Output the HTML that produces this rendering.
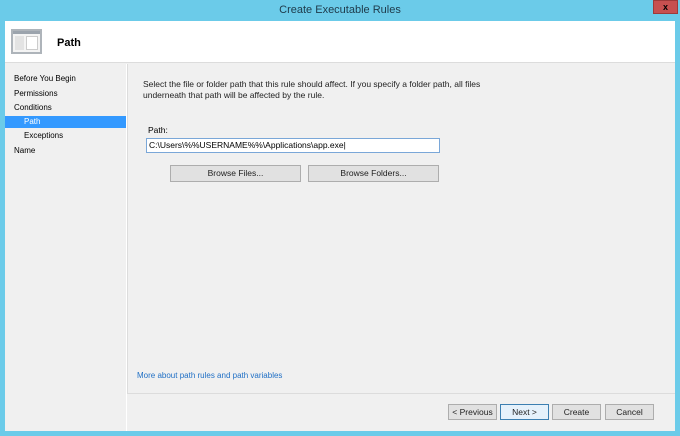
<!DOCTYPE html>
<html><head><style>
*{margin:0;padding:0;box-sizing:border-box}
body{width:680px;height:436px;background:#6bcbe9;font-family:"Liberation Sans",sans-serif;font-size:9px;color:#000;position:relative;overflow:hidden}
.a{position:absolute}
.btn{position:absolute;background:#e1e1e1;border:1px solid #adadad;text-align:center;font-size:8.5px;color:#222}
</style></head><body>
<div class="a" style="left:0;top:0;width:680px;height:21px;text-align:center;line-height:20px;font-size:11px;color:#1e3a4a">Create Executable Rules</div>
<div class="a" style="left:653px;top:0;width:25px;height:14px;background:#c75050;border:1px solid #9e3a3a;color:#000;font-weight:bold;font-size:9px;text-align:center;line-height:12px">x</div>
<div class="a" style="left:5px;top:21px;width:670px;height:410px;background:#f0f0f0"></div>
<div class="a" style="left:5px;top:21px;width:670px;height:42px;background:#fff;border-bottom:1px solid #dcdcdc"></div>
<div class="a" style="left:11px;top:29px;width:31px;height:25px;background:#f4f4f4;border:2px solid #aeb4ba">
 <div class="a" style="left:0;top:0;width:27px;height:3px;background:#9ca4ad"></div>
 <div class="a" style="left:2px;top:5px;width:9px;height:14px;background:#e3e3e3"></div>
 <div class="a" style="left:13px;top:5px;width:12px;height:14px;background:#fff;border:1px solid #ccc"></div>
</div>
<div class="a" style="left:57px;top:37px;font-size:11px;font-weight:bold">Path</div>
<div class="a" style="left:126px;top:64px;width:1px;height:367px;background:#fff"></div>
<div class="a" style="left:127px;top:64px;width:548px;height:330px;background:#f0f0f0;border-left:1px solid #dcdcdc"></div>
<div class="a" style="left:14px;top:72px;line-height:14.7px;font-size:8px">Before You Begin<br>Permissions<br>Conditions</div>
<div class="a" style="left:5px;top:116px;width:121px;height:12px;background:#3399ff"></div>
<div class="a" style="left:24px;top:116px;line-height:12px;font-size:8px;color:#fff">Path</div>
<div class="a" style="left:24px;top:131px;font-size:8px">Exceptions</div>
<div class="a" style="left:14px;top:146px;font-size:8px">Name</div>
<div class="a" style="left:143px;top:79px;font-size:8.5px;line-height:11px;color:#222">Select the file or folder path that this rule should affect. If you specify a folder path, all files<br>underneath that path will be affected by the rule.</div>
<div class="a" style="left:148px;top:125px;font-size:8.5px">Path:</div>
<div class="a" style="left:146px;top:138px;width:294px;height:15px;background:#fff;border:1px solid #7aa7d8;font-size:8.5px;line-height:13px;padding-left:2px">C:\Users\%%USERNAME%%\Applications\app.exe|</div>
<div class="btn" style="left:170px;top:165px;width:131px;height:17px;line-height:15px">Browse Files...</div>
<div class="btn" style="left:308px;top:165px;width:131px;height:17px;line-height:15px">Browse Folders...</div>
<div class="a" style="left:137px;top:371px;font-size:8px;color:#1f6fc5">More about path rules and path variables</div>
<div class="a" style="left:127px;top:393px;width:548px;height:1px;background:#dcdcdc"></div>
<div class="btn" style="left:448px;top:404px;width:49px;height:16px;line-height:14px">&lt; Previous</div>
<div class="btn" style="left:500px;top:404px;width:49px;height:16px;line-height:14px;border-color:#3c7fb1;background:#e5f1fb">Next &gt;</div>
<div class="btn" style="left:552px;top:404px;width:49px;height:16px;line-height:14px">Create</div>
<div class="btn" style="left:605px;top:404px;width:49px;height:16px;line-height:14px">Cancel</div>
</body></html>
